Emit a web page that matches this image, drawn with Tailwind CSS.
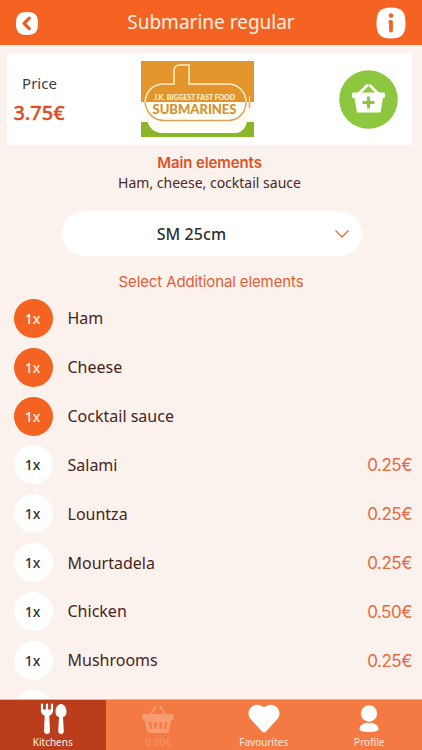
<!DOCTYPE html>
<html lang="en">
<head>
<meta charset="utf-8">
<title>Submarine regular</title>
<script src="https://cdn.jsdelivr.net/npm/@tailwindcss/browser@4"></script>
</head>
<body class="h-[750px] w-[422px] overflow-hidden bg-[#fcf2ed] font-['Noto_Sans',sans-serif]">
<div class="flex h-[750px] flex-col overflow-hidden">
  <header class="flex h-[45px] shrink-0 items-center justify-between bg-[#f46321] pr-[16px] pl-[16px]">
    <svg class="mt-[2px] h-[23px] w-[22px]" viewBox="0 0 22 23"><path d="M11 0C19 0 22 3 22 11.500S19 23 11 23 0 20 0 11.500 3 0 11 0Z" fill="#fff"/><path d="M13.300 6.200 8 11.400 13.300 16.600" fill="none" stroke="#ee5b24" stroke-width="3.200" stroke-linecap="round" stroke-linejoin="round"/></svg>
    <h1 class="-mt-[2px] pl-[8px] text-[19px] leading-[44px] whitespace-nowrap text-[#fff0e6]">Submarine regular</h1>
    <svg class="h-[32px] w-[30px]" viewBox="0 0 30 32"><path d="M15 0.500C26 0.500 29.500 5 29.500 16S26 31.500 15 31.500 0.500 27 0.500 16 4 0.500 15 0.500Z" fill="#fff"/><circle cx="15" cy="8.600" r="2.300" fill="#f46321"/><path d="M14.300 15H15V23.500" fill="none" stroke="#f46321" stroke-width="3.800" stroke-linecap="round" stroke-linejoin="round"/></svg>
  </header>

  <section class="mt-[8px] ml-[7px] flex h-[92px] w-[405px] shrink-0 items-center bg-white pr-[14px] pl-[6px]">
    <div class="flex w-[53px] flex-col items-center">
      <span class="text-[15px] leading-[22px] text-[#3c3c3c]">Price</span>
      <span class="mt-[5px] -ml-[1px] text-[20px] leading-[28px] font-medium text-[#e04a20] [-webkit-text-stroke:0.300px_#e04a20]">3.75€</span>
    </div>
    <svg class="ml-[75px] h-[76px] w-[113px]" viewBox="0 0 113 76" font-family="Lato, sans-serif">
      <rect width="113" height="76" fill="#fffef5"/>
      <rect width="113" height="41" fill="#e3942b"/>
      <path d="M0 61H7C9 68 14 72 23 72H93C101 72 104 67 105 61H113V76H0Z" fill="#8ab62a"/>
      <path d="M6 60H106C105 67 101 72 93 72H23C14 72 9 68 6 60Z" fill="#fffef5"/>
      <path d="M4 41C5 30 12 23 23 23H33V10Q33 4 39 4H48V23H87C97 23 105 31 105 41" fill="none" stroke="#fff0c9" stroke-width="1.500"/>
      <path d="M4 41C5 52 13 59.500 23 59.500H87C97 59.500 105 52 105 41M108.500 41V47" fill="none" stroke="#dca35c" stroke-width="1.500"/>
      <path d="M108.500 35V41" stroke="#fff0c9"/>
      <text x="13" y="38.500" font-size="7" font-weight="900" fill="#fff5dc" textLength="81" lengthAdjust="spacingAndGlyphs">J.K. BIGGEST FAST FOOD</text>
      <text x="11.500" y="53" font-size="13.500" font-weight="900" fill="#d5902f" textLength="84" lengthAdjust="spacingAndGlyphs">SUBMARINES</text>
    </svg>
    <svg class="ml-auto h-[59px] w-[59px]" viewBox="0 0 59 59"><circle cx="29.500" cy="29.500" r="29.300" fill="#8dc73f"/><path d="M19.500 24 28 15.500M39.500 24 31 15.500" stroke="#fff" stroke-width="2.800" stroke-linecap="round"/><path d="M14.500 22.500H44.500Q46 22.500 46 24V26.500Q46 28 44.500 28H44L41.500 42.500H18L15.500 28H14.500Q13 28 13 26.500V24Q13 22.500 14.500 22.500Z" fill="#fff"/><path d="M29.500 26.500V38.500M23.500 32.500H35.500" stroke="#8dc73f" stroke-width="3"/></svg>
  </section>

  <section class="flex shrink-0 flex-col items-center">
    <h2 class="mt-[8px] mr-[3px] font-['Inter',sans-serif] text-[15px] leading-[20px] font-semibold tracking-[-0.100px] text-[#df5227]">Main elements</h2>
    <p class="mt-[0px] mr-[3px] text-[14px] leading-[20px] text-[#4a2725]">Ham, cheese, cocktail sauce</p>
    <div class="mt-[18px] mr-[-1px] flex h-[45px] w-[300px] items-center rounded-full bg-white pr-[12px]">
      <span class="flex-1 pr-[12px] text-center text-[16px] leading-[24px] font-medium tracking-[0.100px] text-[#2e2e33]">SM 25cm</span>
      <svg class="h-[10px] w-[16px]" viewBox="0 0 16 10"><path d="M1.500 1.500 8 8 14.500 1.500" fill="none" stroke="#e0703c" stroke-width="1.300"/></svg>
    </div>
    <h2 class="mt-[16px] font-['Inter',sans-serif] text-[15px] leading-[20px] tracking-[-0.120px] text-[#e15d35]">Select Additional elements</h2>
  </section>

  <ul class="mt-[2px] flex min-h-0 flex-1 flex-col overflow-hidden text-[16px] text-[#452522] [&>li]:flex [&>li]:h-[48.850px] [&>li]:shrink-0 [&>li]:items-center [&>li]:pr-[10px] [&>li]:pl-[14px] [&>li>b]:flex [&>li>b]:size-[39px] [&>li>b]:items-center [&>li>b]:justify-center [&>li>b]:rounded-full [&>li>b]:pr-[2px] [&>li>b]:text-[14px] [&>li>b]:font-medium [&>li>i]:mt-[2px] [&>li>i]:font-['Inter',sans-serif] [&>li>i]:text-[17px] [&>li>i]:tracking-[-0.500px] [&>li>i]:text-[#e46b3e] [&>li>i]:not-italic [&>li>span]:flex-1 [&>li>span]:pl-[14.500px]">
    <li><b class="bg-[#f46321] text-[#fff0e6]">1x</b><span>Ham</span></li>
    <li><b class="bg-[#f46321] text-[#fff0e6]">1x</b><span>Cheese</span></li>
    <li><b class="bg-[#f46321] text-[#fff0e6]">1x</b><span>Cocktail sauce</span></li>
    <li><b class="bg-white text-[#303030]">1x</b><span>Salami</span><i>0.25€</i></li>
    <li><b class="bg-white text-[#303030]">1x</b><span>Lountza</span><i>0.25€</i></li>
    <li><b class="bg-white text-[#303030]">1x</b><span>Mourtadela</span><i>0.25€</i></li>
    <li><b class="bg-white text-[#303030]">1x</b><span>Chicken</span><i>0.50€</i></li>
    <li><b class="bg-white text-[#303030]">1x</b><span>Mushrooms</span><i>0.25€</i></li>
    <li><b class="bg-white"></b></li>
  </ul>

  <nav class="grid h-[51px] shrink-0 grid-cols-4 border-t border-[#e0b6a0] bg-[#f57942] text-[10px] leading-[14px] text-[#ffe9dc]">
    <div class="flex flex-col items-center bg-[#bb3d1c] pt-[3px] text-[#fff0e6]">
      <svg class="h-[32px] w-[28px]" viewBox="0 0 28 32" fill="#fff"><path d="M3 1.500V8M8 1.500V8M13 1.500V8" stroke="#fff" stroke-width="2.200" stroke-linecap="round"/><path d="M2 6.500H14C14 10.500 12.500 12 10.300 12.500L11 28.500Q10.500 31 8 31T5 28.500L5.700 12.500C3.500 12 2 10.500 2 6.500Z"/><path d="M22 1C25.500 1 27.500 5 27.500 9C27.500 12 26 13.500 24 14L24.800 28.500Q24.500 31 22 31T19.200 28.500L20 14C18 13.500 16.500 12 16.500 9C16.500 5 18.500 1 22 1Z"/></svg>
      <span>Kitchens</span>
    </div>
    <div class="flex flex-col items-center pt-[3px] text-[#f99568]">
      <svg class="h-[32px] w-[32px]" viewBox="0 0 32 32"><path d="M7.500 12.500 14 3.500M24.500 12.500 18 3.500" stroke="#f89b70" stroke-width="2" stroke-linecap="round"/><path fill-rule="evenodd" d="M1.500 11H30.500Q31.500 11 31.500 12V15.500Q31.500 17 30 17H29.500L27 28Q26.500 30 24.500 30H7.500Q5.500 30 5 28L2.500 17H2Q.5 17 .5 15.500V12Q.5 11 1.500 11ZM6.500 19 8.300 26H10L9 19ZM12 19 12.500 26H14.500V19ZM17.500 19V26H19.500L20 19ZM23 19 22 26H23.700L25.500 19Z" fill="#f89b70"/></svg>
      <span>0.00€</span>
    </div>
    <div class="flex flex-col items-center pt-[3px]">
      <svg class="h-[32px] w-[32px]" viewBox="0 0 32 32"><path d="M16 4.500C20 .7 25 1 28.500 4C32.500 7.500 32.300 13 29 16.500L18 28.500Q16 30.500 14 28.500L3 16.500C-.3 13-.5 7.500 3.500 4C7 1 12 .7 16 4.500Z" fill="#fff"/></svg>
      <span>Favourites</span>
    </div>
    <div class="flex flex-col items-center pt-[3px]">
      <svg class="h-[32px] w-[20px]" viewBox="0 0 20 32" fill="#fff"><path d="M.4 25.500C1 22 5 19.500 10 19.500S19 22 19.600 25.500C20 28 15.500 29 10 29S0 28 .4 25.500Z"/><circle cx="10" cy="10.500" r="8.800" stroke="#f57942" stroke-width="1.300"/></svg>
      <span>Profile</span>
    </div>
  </nav>
</div>
</body>
</html>
